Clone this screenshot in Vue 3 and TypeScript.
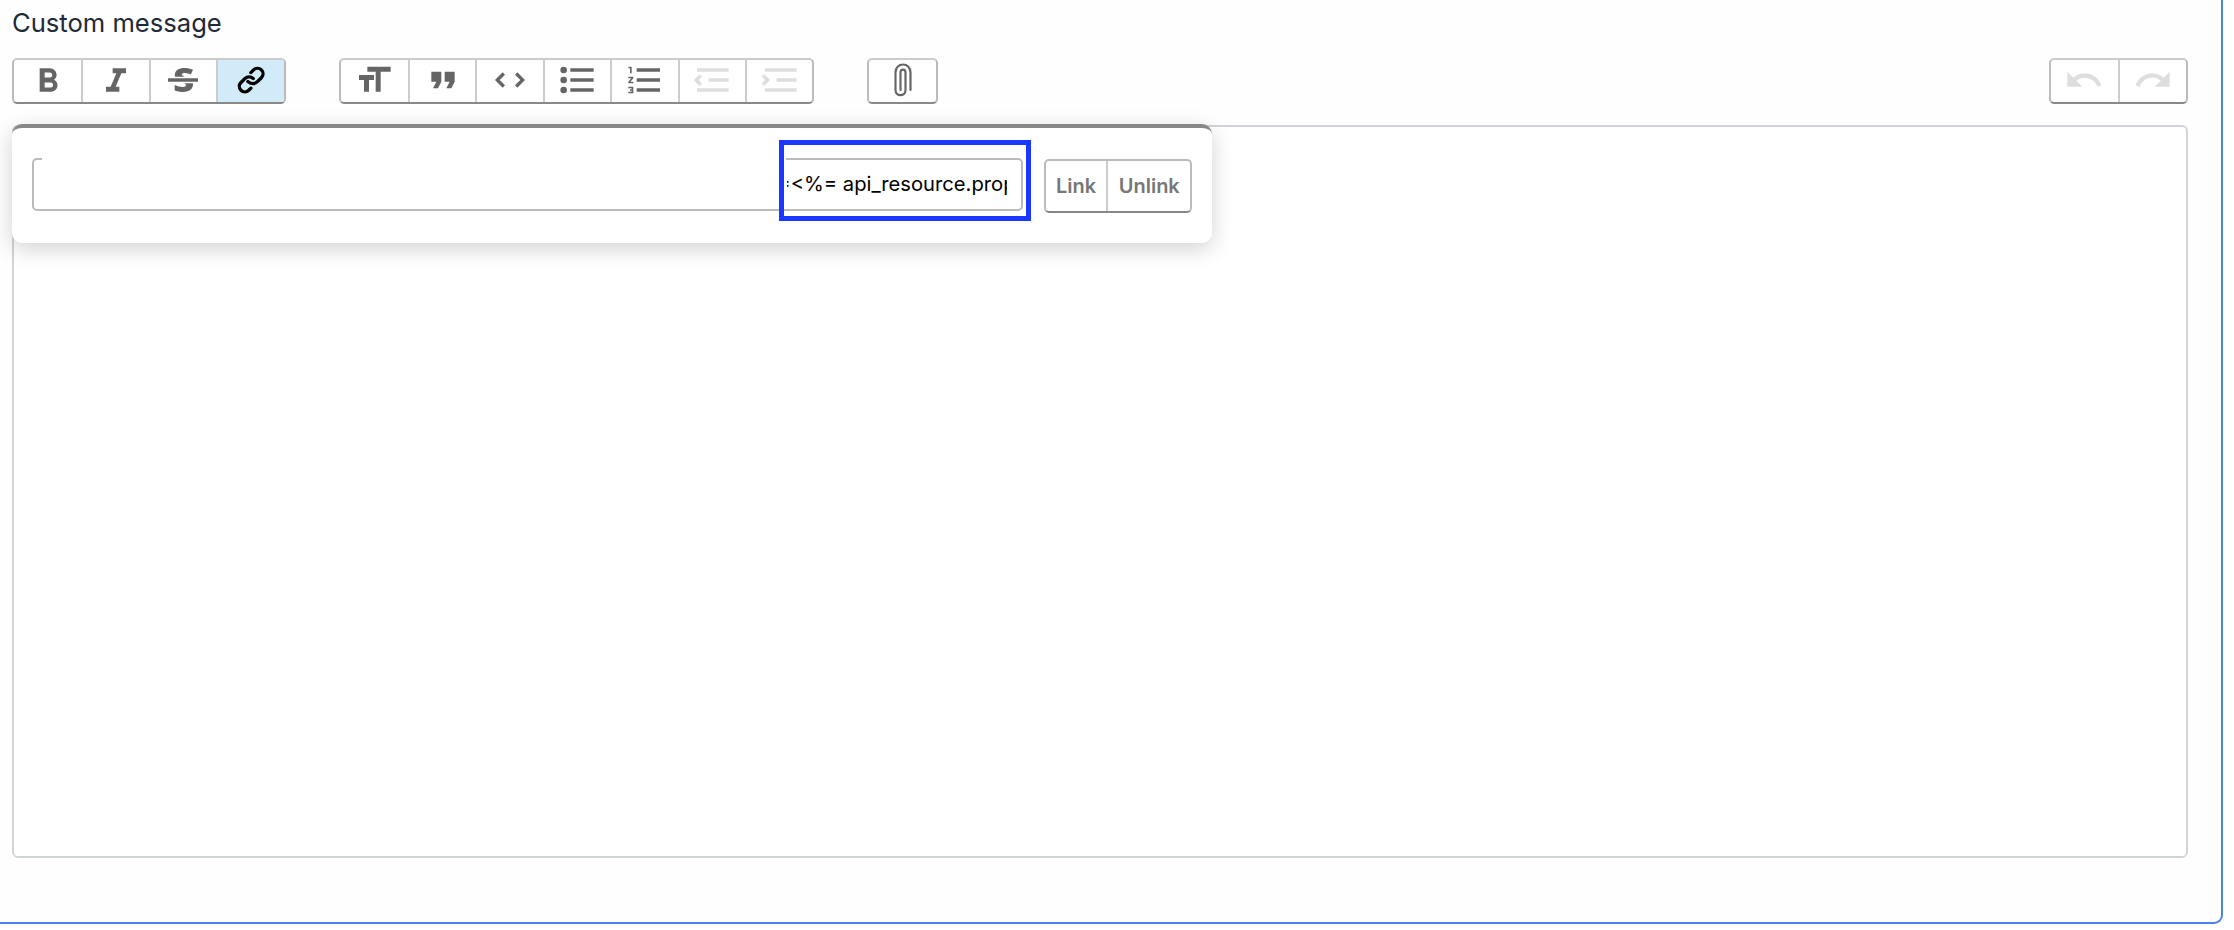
<script setup lang="ts">
interface Tool { name: string; paths: string[]; active?: boolean; disabled?: boolean; stroke?: boolean }

const textTools: Tool[] = [
  { name: 'Bold', paths: ['M15.6 11.8c1-.7 1.6-1.8 1.6-2.8a4 4 0 0 0-4-4H7v14h7c2.1 0 3.7-1.7 3.7-3.8 0-1.5-.8-2.8-2.1-3.4zM10 7.5h3a1.5 1.5 0 1 1 0 3h-3v-3zm3.5 9H10v-3h3.5a1.5 1.5 0 1 1 0 3z'] },
  { name: 'Italic', paths: ['M10 5v3h2.2l-3.4 8H6v3h8v-3h-2.2l3.4-8H18V5h-8z'] },
  { name: 'Strike', paths: ['M12.73 14l.28.14c.26.15.45.3.57.44.12.14.18.3.18.5 0 .3-.15.56-.44.75-.3.2-.76.3-1.39.3A13.52 13.52 0 0 1 7 14.95v3.37a10.64 10.64 0 0 0 4.84.88c1.26 0 2.35-.19 3.28-.56.93-.37 1.64-.9 2.14-1.57s.74-1.45.74-2.32c0-.26-.02-.51-.06-.75h-5.21zm-5.5-4c-.08-.34-.12-.7-.12-1.1 0-1.29.52-2.3 1.58-3.02 1.05-.72 2.5-1.08 4.34-1.08 1.62 0 3.28.34 4.97 1l-1.3 2.93c-1.47-.6-2.73-.9-3.8-.9-.55 0-.96.08-1.2.26-.26.17-.38.38-.38.64 0 .27.16.52.48.74.17.12.53.3 1.05.53H7.23zM3 13h18v-2H3v2z'] },
  { name: 'Link', active: true, paths: ['M18.948 5.258a4.337 4.337 0 0 0-6.108 0L11.217 6.87a.993.993 0 0 0 0 1.41c.392.39 1.027.39 1.418 0l1.623-1.61a2.323 2.323 0 0 1 3.271 0 2.29 2.29 0 0 1 0 3.251l-2.393 2.38a3.021 3.021 0 0 1-4.255 0l-.05-.049a1.007 1.007 0 0 0-1.418 0 .993.993 0 0 0 0 1.41l.05.049a5.036 5.036 0 0 0 7.091 0l2.394-2.38a4.275 4.275 0 0 0 0-6.072zm-13.683 13.6a4.337 4.337 0 0 0 6.108 0l1.262-1.255a.993.993 0 0 0 0-1.41 1.007 1.007 0 0 0-1.418 0L9.954 17.45a2.323 2.323 0 0 1-3.27 0 2.29 2.29 0 0 1 0-3.251l2.344-2.331a2.579 2.579 0 0 1 3.631 0c.392.39 1.027.39 1.419 0a.993.993 0 0 0 0-1.41 4.593 4.593 0 0 0-6.468 0l-2.345 2.33a4.275 4.275 0 0 0 0 6.072z'] },
]
const blockTools: Tool[] = [
  { name: 'Heading', paths: ['M12 9v3H9v7H6v-7H3V9h9zM8 4h14v3h-6v12h-3V7H8V4z'] },
  { name: 'Quote', paths: ['M6 17h3l2-4V7H5v6h3zm8 0h3l2-4V7h-6v6h3z'] },
  { name: 'Code', paths: ['M18.2 12 15 15.2l1.4 1.4L21 12l-4.6-4.6L15 8.8l3.2 3.2zM5.8 12 9 8.8 7.6 7.4 3 12l4.6 4.6L9 15.2 5.8 12z'] },
  { name: 'Bullets', paths: ['M4 4a2 2 0 1 0 0 4 2 2 0 0 0 0-4zm0 6a2 2 0 1 0 0 4 2 2 0 0 0 0-4zm0 6a2 2 0 1 0 0 4 2 2 0 0 0 0-4zm4 3h14v-2H8v2zm0-6h14v-2H8v2zm0-8v2h14V5H8z'] },
  { name: 'Numbers', paths: ['M2 17h2v.5H3v1h1v.5H2v1h3v-4H2v1zm1-9h1V4H2v1h1v3zm-1 3h1.8L2 13.1v.9h3v-1H3.2L5 10.9V10H2v1zm5-6v2h14V5H7zm0 14h14v-2H7v2zm0-6h14v-2H7v2z'] },
  { name: 'Decrease', disabled: true, paths: ['M3 19h19v-2H3v2zm7-6h12v-2H10v2zm-8.3-.3l2.8 2.9L6 14.2 4 12l2-2-1.4-1.5L1 12l.7.7zM3 5v2h19V5H3z'] },
  { name: 'Increase', disabled: true, paths: ['M3 19h19v-2H3v2zm7-6h12v-2H10v2zm-6.9-1L1 14.2l1.4 1.4L6 12l-.7-.7-2.8-2.8L1 9.9 3.1 12zM3 5v2h19V5H3z'] },
]
const fileTools: Tool[] = [
  { name: 'Attach', stroke: true, paths: ['M10.5 18V7.5c0-2.25 3-2.25 3 0V18c0 4.125-6 4.125-6 0V7.5c0-6.375 9-6.375 9 0V18'] },
]
const historyTools: Tool[] = [
  { name: 'Undo', disabled: true, paths: ['M12.5 8c-2.6 0-5 1-6.9 2.6L2 7v9h9l-3.6-3.6A8 8 0 0 1 20 16l2.4-.8a10.5 10.5 0 0 0-10-7.2z'] },
  { name: 'Redo', disabled: true, paths: ['M18.4 10.6a10.5 10.5 0 0 0-16.9 4.6L4 16a8 8 0 0 1 12.7-3.6L13 16h9V7l-3.6 3.6z'] },
]
const groups = [
  { key: 'text', tools: textTools, cls: 'g-text' },
  { key: 'block', tools: blockTools, cls: 'g-block' },
  { key: 'file', tools: fileTools, cls: 'g-file' },
]
</script>

<template>
  <div class="frame">
    <label class="label">Custom message</label>
    <div class="toolbar">
      <div class="left-tools">
        <div v-for="g in groups" :key="g.key" class="group" :class="g.cls">
          <button
            v-for="t in g.tools"
            :key="t.name"
            type="button"
            class="tool"
            :class="{ active: t.active, disabled: t.disabled }"
            :aria-label="t.name"
          >
            <svg viewBox="0 0 24 24" class="icon">
              <path
                v-for="(d, i) in t.paths"
                :key="i"
                :d="d"
                :class="t.stroke ? 'stroked' : ''"
              />
            </svg>
          </button>
        </div>
      </div>
      <div class="group g-history">
        <button
          v-for="t in historyTools"
          :key="t.name"
          type="button"
          class="tool disabled"
          :aria-label="t.name"
        >
          <svg viewBox="0 0 24 24" class="icon"><path v-for="(d, i) in t.paths" :key="i" :d="d" /></svg>
        </button>
      </div>
    </div>
    <div class="editor-wrap">
      <div class="editor"></div>
      <div class="dialog">
        <div class="url-input">
          <div class="mask"></div>
          <div class="highlight">
            <div class="clip"><span class="url">=&lt;%= api_resource.prope</span></div>
          </div>
        </div>
        <div class="link-buttons">
          <button type="button" class="link-btn">Link</button>
          <button type="button" class="link-btn">Unlink</button>
        </div>
      </div>
    </div>
  </div>
</template>

<style>
html, body { background: #fff; }
</style>

<style scoped>
.frame {
  box-sizing: border-box;
  width: 2222.5px;
  height: 924px;
  padding: 0 33px 0 12px;
  background: #fefefe;
  border-right: 2.5px solid #4d80f0;
  border-bottom: 2.5px solid #4d80f0;
  border-bottom-right-radius: 9px;
  font-family: Inter, "Liberation Sans", sans-serif;
}
.label {
  display: block;
  height: 58px;
  padding-top: 7px;
  box-sizing: border-box;
  font-size: 25.6px;
  line-height: 32px;
  color: #1f2937;
}
.toolbar {
  display: flex;
  justify-content: space-between;
  height: 46px;
  margin-bottom: 21px;
}
.left-tools {
  display: flex;
  gap: 53px;
}
.group {
  display: flex;
  box-sizing: border-box;
  height: 46px;
  background: #fff;
  border: 2px solid #bbb;
  border-top-color: #ccc;
  border-bottom: 2.5px solid #888;
  border-radius: 5px;
  overflow: hidden;
}
.tool {
  display: flex;
  align-items: center;
  justify-content: center;
  box-sizing: border-box;
  width: 67.4px;
  padding: 0 0 1.5px;
  background: transparent;
  border: 0;
  border-left: 2px solid #ccc;
}
.tool:first-child { border-left: 0; }
.tool.active { background: #d2ebf8; }
.icon { width: 40px; height: 40px; display: block; opacity: 0.6; }
.tool.active .icon { opacity: 1; }
.tool.disabled .icon { opacity: 0.125; }
.stroked {
  fill: none;
  stroke: #000;
  stroke-width: 1.3;
  stroke-miterlimit: 10;
  stroke-linecap: round;
  stroke-linejoin: round;
}
.g-file .tool { width: 67px; }
.editor-wrap {
  position: relative;
  height: 733px;
}
.editor {
  box-sizing: border-box;
  height: 100%;
  background: #fff;
  border: 2px solid #d1d5db;
  border-radius: 6px;
}
.dialog {
  position: absolute;
  top: -1px;
  left: 0;
  box-sizing: border-box;
  display: flex;
  align-items: flex-start;
  width: 1200px;
  height: 119px;
  padding: 30px 20px 0 20px;
  gap: 21px;
  background: #fff;
  border-top: 4px solid #888;
  border-radius: 10px;
  box-shadow: 0 6px 22px rgba(0, 0, 0, 0.18);
}
.url-input {
  position: relative;
  box-sizing: border-box;
  flex: 1;
  height: 53px;
  background: #fff;
  border: 2px solid #bbb;
  border-radius: 5px;
}
.mask {
  position: absolute;
  top: -2px;
  left: 8px;
  width: 744px;
  height: 3px;
  background: #fff;
}
.highlight {
  position: absolute;
  top: -20px;
  right: -10px;
  box-sizing: border-box;
  display: flex;
  align-items: center;
  width: 252px;
  height: 81px;
  padding: 6px 19px 0 3px;
  border: 5px solid #1a38ff;
}
.clip {
  flex: 1;
  overflow: hidden;
  white-space: nowrap;
}
.url {
  display: inline-block;
  margin-left: -9.5px;
  font-size: 20.2px;
  line-height: 28px;
  color: #000;
}
.link-buttons {
  display: flex;
  box-sizing: border-box;
  height: 54px;
  margin-top: 1px;
  background: #fff;
  border: 2px solid #bbb;
  border-bottom: 2.5px solid #888;
  border-radius: 5px;
  overflow: hidden;
}
.link-btn {
  box-sizing: border-box;
  padding: 0 10.25px;
  background: transparent;
  border: 0;
  border-left: 2px solid #ccc;
  font-family: Inter, "Liberation Sans", sans-serif;
  font-size: 20px;
  font-weight: 600;
  color: #777;
}
.link-btn:first-child { border-left: 0; }
</style>
